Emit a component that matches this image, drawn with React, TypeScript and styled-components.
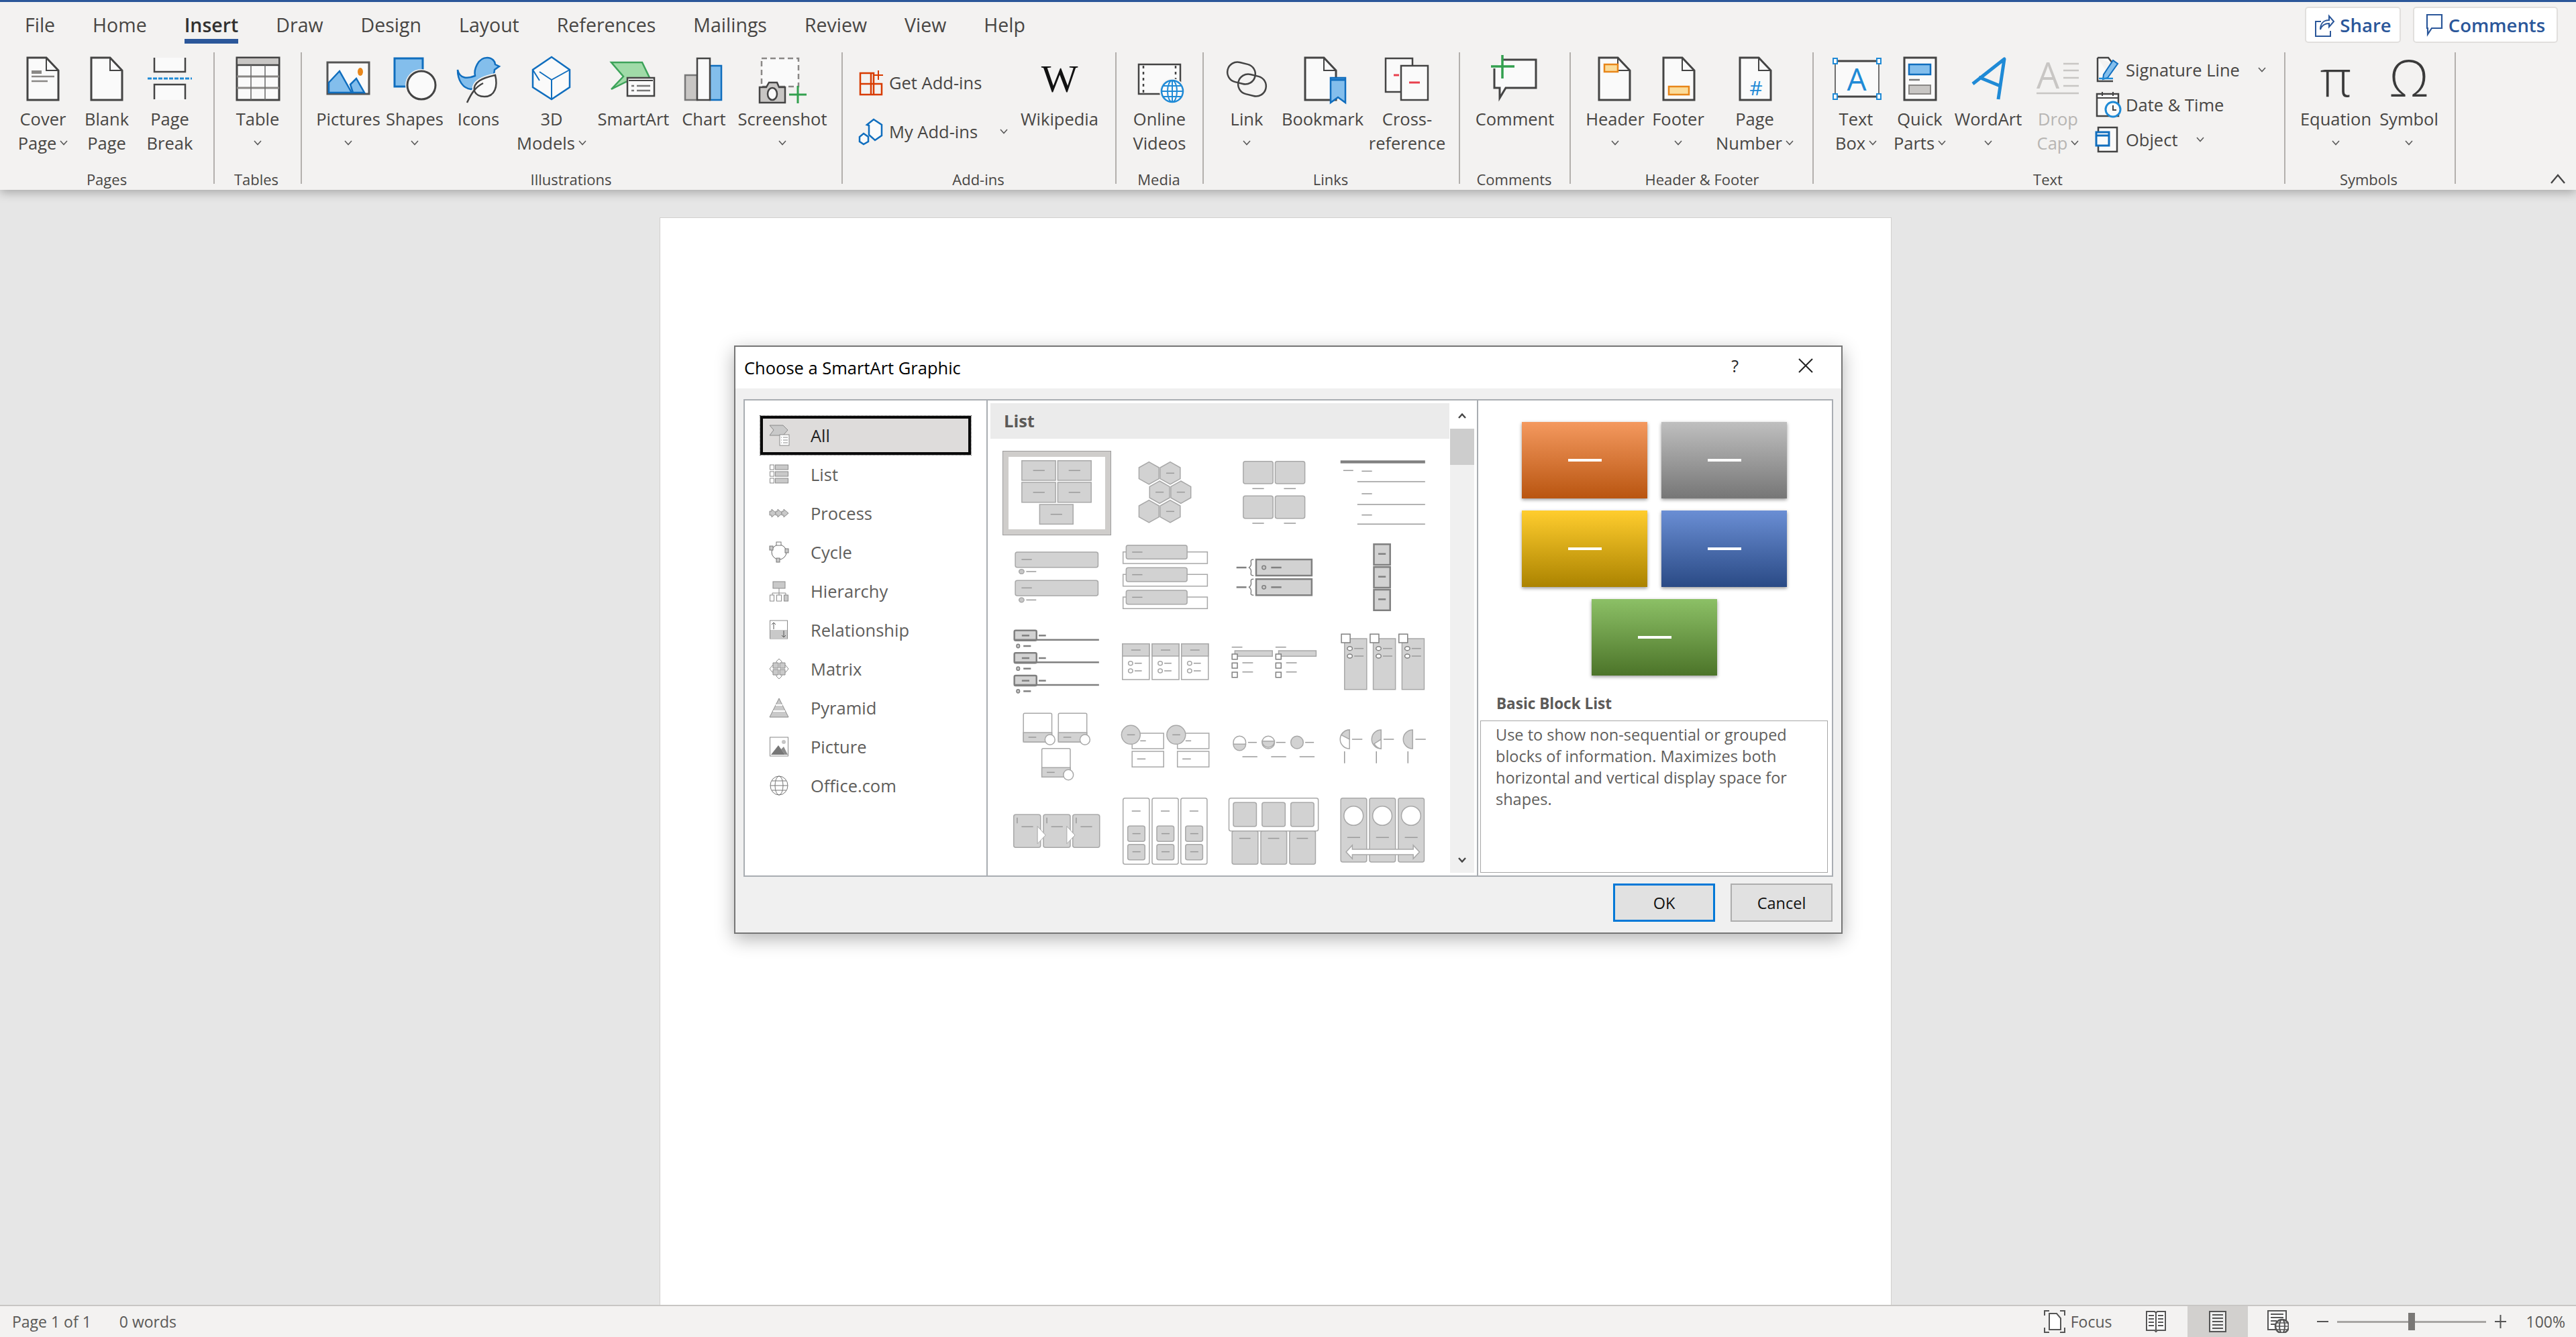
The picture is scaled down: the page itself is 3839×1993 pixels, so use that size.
import React from 'react'
import styled, { createGlobalStyle } from 'styled-components'

const INK = '#444444'
const BLUE = '#106ebe'
const LBLUE = '#83beec'
const SKY = '#1f8ad6'
const GREEN = '#33a04f'
const PAPER = '#fafafa'
const TXT = '#484644'

const GlobalStyle = createGlobalStyle`
  html, body { margin: 0; padding: 0; background: #e6e6e6; }
  body { font-family: "Open Sans", "Liberation Sans", sans-serif; overflow: hidden; }
`

const Screen = styled.div`
  width: 3839px;
  height: 1993px;
  display: flex;
  flex-direction: column;
  position: relative;
  overflow: hidden;
`

/* ---------- ribbon ---------- */
const Ribbon = styled.header`
  flex: none;
  background: #f3f2f1;
  border-top: 3px solid #2b579a;
  box-shadow: 0 4px 14px rgba(0, 0, 0, 0.28);
  position: relative;
  z-index: 2;
`

const TabRow = styled.div`
  height: 68px;
  display: flex;
  align-items: center;
  padding: 0 27px 0 37px;
`

const Tab = styled.div<{ $active?: boolean }>`
  height: 68px;
  line-height: 68px;
  margin-right: 56px;
  font-size: 28.5px;
  color: ${({ $active }) => ($active ? '#323130' : TXT)};
  font-weight: ${({ $active }) => ($active ? 600 : 400)};
  position: relative;
  ${({ $active }) =>
    $active &&
    `&::after {
      content: '';
      position: absolute;
      left: 0;
      right: 0;
      top: 55px;
      height: 7px;
      background: #2b579a;
    }`}
`

const TopActions = styled.div`
  margin-left: auto;
  display: flex;
  gap: 18px;
`

const ActionButton = styled.div<{ $w: number }>`
  width: ${({ $w }) => $w}px;
  height: 54px;
  box-sizing: border-box;
  background: #fff;
  border: 2px solid #e1dfdd;
  border-radius: 5px;
  display: flex;
  align-items: center;
  justify-content: center;
  gap: 8px;
  color: #2b579a;
  font-size: 27.5px;
  font-weight: 600;
`

const RibbonBody = styled.div`
  height: 212px;
  padding-top: 7px;
  box-sizing: border-box;
  display: flex;
  align-items: flex-start;
`

const Group = styled.section<{ $w: number; $pad?: number }>`
  width: ${({ $w }) => $w}px;
  flex: none;
  padding-left: ${({ $pad }) => $pad ?? 0}px;
  box-sizing: border-box;
  display: flex;
  flex-direction: column;
`

const GroupItems = styled.div`
  height: 174px;
  display: flex;
`

const GroupLabel = styled.div<{ $shift?: number }>`
  height: 30px;
  line-height: 30px;
  font-size: 22px;
  color: ${TXT};
  text-align: center;
  white-space: nowrap;
  transform: translateX(${({ $shift }) => $shift ?? 0}px);
`

const Sep = styled.div`
  width: 2px;
  height: 196px;
  flex: none;
  background: #b3b0ad;
`

const BigButton = styled.div<{ $w: number; $off?: boolean }>`
  width: ${({ $w }) => $w}px;
  flex: none;
  padding-top: 4px;
  display: flex;
  flex-direction: column;
  align-items: center;
  color: ${({ $off }) => ($off ? '#b7b5b3' : TXT)};
  font-size: 25.5px;
  line-height: 36px;
`

const IconSlot = styled.div`
  height: 72px;
  width: 70px;
  margin-bottom: 5px;
  display: flex;
  align-items: center;
  justify-content: center;
`

const Ico = styled.svg`
  width: 70px;
  height: 72px;
  overflow: visible;
  display: block;
`

const TextLine = styled.div`
  height: 36px;
  display: flex;
  align-items: center;
  gap: 5px;
  white-space: nowrap;
`

const SmallStack = styled.div<{ $w: number; $top: number; $left?: number }>`
  width: ${({ $w }) => $w}px;
  flex: none;
  padding-top: ${({ $top }) => $top}px;
  padding-left: ${({ $left }) => $left ?? 0}px;
  box-sizing: border-box;
  display: flex;
  flex-direction: column;
`

const SmallRow = styled.div<{ $h: number }>`
  height: ${({ $h }) => $h}px;
  display: flex;
  align-items: center;
  gap: 9px;
  font-size: 25.5px;
  color: ${TXT};
  white-space: nowrap;
`

const SmallIco = styled.svg`
  width: 36px;
  height: 38px;
  overflow: visible;
  flex: none;
`

const ChevGap = styled.span<{ $w: number }>`
  display: inline-block;
  width: ${({ $w }) => $w}px;
`

const WikiMark = styled.span`
  font-family: "Liberation Serif", serif;
  font-size: 58px;
  line-height: 72px;
  color: #111;
`

const MathMark = styled.span`
  font-family: "Open Sans", "DejaVu Sans", sans-serif;
  font-weight: 300;
  font-size: 76px;
  line-height: 66px;
  color: #3a3a3a;
  height: 72px;
`

const Collapse = styled.div`
  margin: 180px 0 0 140px;
`

/* ---------- canvas ---------- */
const Canvas = styled.main`
  flex: 1;
  min-height: 0;
  background: #e6e6e6;
  padding: 42px 37px 0 0;
  display: flex;
  justify-content: center;
`

const PageSheet = styled.div`
  width: 1834px;
  background: #fff;
  box-shadow: 0 0 0 1px #d2d0ce;
`

/* ---------- dialog ---------- */
const Dialog = styled.div`
  position: absolute;
  left: 1094px;
  top: 515px;
  width: 1652px;
  height: 877px;
  box-sizing: border-box;
  border: 2px solid #767676;
  background: #f0f0f0;
  box-shadow: 0 8px 26px rgba(0, 0, 0, 0.3);
  z-index: 3;
  display: flex;
  flex-direction: column;
`

const TitleBar = styled.div`
  height: 62px;
  flex: none;
  background: #fff;
  display: flex;
  align-items: center;
  padding: 0 42px 0 13px;
  font-size: 25.5px;
  color: #000;
`

const TitleTools = styled.div`
  margin-left: auto;
  display: flex;
  align-items: center;
  gap: 89px;
  font-size: 25px;
  color: #222;
  padding-bottom: 6px;
`

const DialogBody = styled.div`
  margin: 16px 12px 0;
  height: 712px;
  box-sizing: border-box;
  flex: none;
  border: 2px solid #a9adb2;
  background: #fff;
  display: flex;
`

const CategoryPane = styled.nav`
  width: 360px;
  flex: none;
  box-sizing: border-box;
  padding: 23px 23px 0;
  border-right: 0;
`

const Category = styled.div<{ $on?: boolean }>`
  height: 58px;
  box-sizing: border-box;
  display: flex;
  align-items: center;
  gap: 33px;
  padding-left: ${({ $on }) => ($on ? 10 : 14)}px;
  font-size: 25.5px;
  color: ${({ $on }) => ($on ? '#222' : '#5f5e5c')};
  ${({ $on }) =>
    $on &&
    `background: #dedcdb;
     border: 4px solid #0a0a0a;
     outline: 1px dotted #555;`}
`

const CatIco = styled.svg`
  width: 28px;
  height: 30px;
  flex: none;
  overflow: visible;
`

const GalleryPane = styled.div`
  width: 733px;
  flex: none;
  box-sizing: border-box;
  border-left: 2px solid #a9adb2;
  border-right: 2px solid #a9adb2;
  padding: 4px 6px 4px 4px;
  display: flex;
  gap: 1px;
`

const GalleryMain = styled.div`
  width: 684px;
  flex: none;
  overflow: hidden;
`

const GalleryHead = styled.div`
  height: 53px;
  line-height: 53px;
  padding-left: 20px;
  background: #ebebeb;
  color: #5c5a58;
  font-size: 25.5px;
  font-weight: 700;
`

const ThumbGrid = styled.div`
  margin: 18px 0 0 18px;
  display: grid;
  grid-template-columns: repeat(4, 162px);
  grid-auto-rows: 125px;
`

const ThumbCell = styled.div<{ $on?: boolean }>`
  width: 162px;
  height: 126px;
  ${({ $on }) => $on && 'box-shadow: inset 0 0 0 1px #9c9c9c, inset 0 0 0 9px #cfcdcb;'}
`

const ThumbSvg = styled.svg`
  width: 162px;
  height: 126px;
  display: block;
  overflow: visible;
  * {
    vector-effect: non-scaling-stroke;
  }
`

const ScrollTrack = styled.div`
  width: 36px;
  flex: none;
  background: #f0f0f0;
  display: flex;
  flex-direction: column;
  align-items: center;
`

const ScrollCap = styled.div`
  height: 38px;
  width: 100%;
  background: #fff;
  display: flex;
  align-items: center;
  justify-content: center;
`

const ScrollThumb = styled.div`
  height: 54px;
  width: 36px;
  background: #cdcdcd;
`

const ScrollEnd = styled.div`
  margin-top: auto;
  height: 38px;
  display: flex;
  align-items: center;
  justify-content: center;
`

const DetailPane = styled.aside`
  width: 525px;
  flex: none;
  display: flex;
  flex-direction: column;
`

const Swatches = styled.div`
  padding-top: 32px;
  display: grid;
  grid-template-columns: 187px 187px;
  grid-auto-rows: 114px;
  column-gap: 21px;
  row-gap: 18px;
  justify-content: center;
`

const Swatch = styled.div<{ $from: string; $to: string; $center?: boolean }>`
  background: linear-gradient(${({ $from }) => $from}, ${({ $to }) => $to});
  box-shadow: 0 2px 5px rgba(0, 0, 0, 0.4);
  display: flex;
  align-items: center;
  justify-content: center;
  ${({ $center }) => $center && 'grid-column: 1 / span 2; width: 187px; justify-self: center;'}
  &::after {
    content: '';
    width: 50px;
    height: 4px;
    background: #fff;
  }
`

const DetailTitle = styled.div`
  margin: 25px 0 0 27px;
  height: 34px;
  line-height: 34px;
  font-size: 22.5px;
  font-weight: 700;
  color: #5c5a58;
`

const DetailText = styled.div`
  margin: 8px 4px 0 3px;
  height: 227px;
  box-sizing: border-box;
  border: 1px solid #a6a6a6;
  padding: 4px 14px 0 22px;
  font-size: 23.5px;
  line-height: 32px;
  color: #605e5c;
`

const DialogFoot = styled.div`
  padding: 10px 13px 0 0;
  display: flex;
  justify-content: flex-end;
  gap: 23px;
`

const DialogButton = styled.div<{ $primary?: boolean }>`
  width: 152px;
  height: 57px;
  box-sizing: border-box;
  background: #e1e1e1;
  border: ${({ $primary }) => ($primary ? '3px solid #0078d7' : '2px solid #adadad')};
  display: flex;
  align-items: center;
  justify-content: center;
  font-size: 23.5px;
  color: #111;
`

/* ---------- status bar ---------- */
const StatusBar = styled.footer`
  flex: none;
  height: 48px;
  box-sizing: border-box;
  border-top: 2px solid #c8c6c4;
  background: #f3f2f1;
  display: flex;
  align-items: center;
  padding: 0 16px 0 18px;
  font-size: 23px;
  color: #5a5957;
`

const StatusText = styled.span<{ $gap?: number }>`
  margin-left: ${({ $gap }) => $gap ?? 0}px;
  white-space: nowrap;
`

const StatusIco = styled.svg<{ $gap?: number; $w: number; $push?: boolean }>`
  width: ${({ $w }) => $w}px;
  height: 34px;
  margin-left: ${({ $gap, $push }) => ($push ? 'auto' : `${$gap ?? 0}px`)};
  flex: none;
`

const ViewTab = styled.div<{ $gap: number; $on?: boolean }>`
  width: 90px;
  height: 46px;
  margin-left: ${({ $gap }) => $gap}px;
  background: ${({ $on }) => ($on ? '#d2d0ce' : 'transparent')};
  display: flex;
  align-items: center;
  justify-content: center;
  flex: none;
`

const ZoomMinus = styled.svg`
  width: 17px;
  height: 4px;
  margin-left: 42px;
  flex: none;
`

const ZoomPlus = styled.svg`
  width: 17px;
  height: 22px;
  flex: none;
`

const ZoomSlider = styled.div`
  width: 222px;
  height: 3px;
  background: #a8a6a4;
  margin: 0 13px;
  position: relative;
  flex: none;
`

const ZoomThumb = styled.div`
  position: absolute;
  left: 106px;
  top: -12px;
  width: 10px;
  height: 26px;
  background: #7a7876;
`

const ChevSvg = styled.svg`
  width: 12px;
  height: 8px;
  flex: none;
`

/* ---------- small bits ---------- */
const Chev = ({ up, dark }: { up?: boolean; dark?: boolean }) => (
  <ChevSvg viewBox="0 0 12 8">
    <path
      d={up ? 'M1 7l5-5.5L11 7' : 'M1 1l5 5.5L11 1'}
      fill="none"
      stroke={dark ? '#444' : '#5a5a5a'}
      strokeWidth={dark ? 2.4 : 1.6}
    />
  </ChevSvg>
)

const DocShape = ({ x = 12, fill = PAPER }: { x?: number; fill?: string }) => (
  <g fill={fill} stroke={INK} strokeWidth="3">
    <path d={`M${x} 4H${x + 28}L${x + 46} 23V67H${x}Z`} />
    <path d={`M${x + 28} 4V23H${x + 46}`} fill="none" strokeWidth="2" />
  </g>
)

interface BigProps {
  w: number
  first?: string
  second?: string
  chev?: 'inline' | 'below'
  off?: boolean
  children: React.ReactNode
}

const Big = ({ w, first, second, chev, off, children }: BigProps) => (
  <BigButton $w={w} $off={off}>
    <IconSlot>{children}</IconSlot>
    <TextLine>{first}</TextLine>
    <TextLine>
      {second}
      {chev && <Chev />}
    </TextLine>
  </BigButton>
)

/* ---------- ribbon drawings ---------- */
const CoverIcon = () => (
  <Ico viewBox="0 0 70 72">
    <DocShape />
    <rect x="18" y="23" width="15" height="5" fill="#8a8886" />
    <path d="M18 32h34M18 39h24" stroke="#8a8886" strokeWidth="2.5" />
  </Ico>
)
const BlankIcon = () => (
  <Ico viewBox="0 0 70 72">
    <DocShape />
  </Ico>
)
const BreakIcon = () => (
  <Ico viewBox="0 0 70 72">
    <path d="M12 4V25H58V4Z" fill={PAPER} stroke="none" />
    <path d="M12 4V25H58V4" fill="none" stroke={INK} strokeWidth="2.5" strokeDasharray="0" />
    <path d="M2 35H68" stroke={SKY} strokeWidth="3" strokeDasharray="6 2" />
    <path d="M12 67V44H58V67Z" fill={PAPER} stroke="none" />
    <path d="M12 66V44H58V66" fill="none" stroke={INK} strokeWidth="2.5" />
  </Ico>
)
const TableIcon = () => (
  <Ico viewBox="0 0 70 72">
    <rect x="4" y="4" width="63" height="63" fill={PAPER} stroke={INK} strokeWidth="3" />
    <rect x="5" y="5" width="61" height="10" fill="#c8c6c4" />
    <path d="M4 15H67" stroke={INK} strokeWidth="2.5" />
    <path d="M4 32H67M4 49H67" stroke="#8a8886" strokeWidth="3" />
    <path d="M25 15V67M46 15V67" stroke="#6a6a6a" strokeWidth="1.5" />
  </Ico>
)
const PicturesIcon = () => (
  <Ico viewBox="0 0 70 72">
    <rect x="4" y="11" width="62" height="47" fill={PAPER} stroke="#555" strokeWidth="3" />
    <path d="M6 41L22 24L40 56H6Z" fill={LBLUE} stroke={BLUE} strokeWidth="2.5" />
    <path d="M38 44L47 35L59 56H42Z" fill={LBLUE} stroke={BLUE} strokeWidth="2.5" />
    <ellipse cx="53" cy="25" rx="4" ry="6" fill="#e8861a" />
  </Ico>
)
const ShapesIcon = () => (
  <Ico viewBox="0 0 70 72">
    <rect x="5" y="5" width="42" height="42" fill={LBLUE} stroke={BLUE} strokeWidth="3" />
    <circle cx="45" cy="45" r="24" fill="#f3f2f1" />
    <circle cx="45" cy="45" r="21" fill={PAPER} stroke={INK} strokeWidth="3" />
  </Ico>
)
const IconsIcon = () => (
  <Ico viewBox="0 0 70 72">
    <path
      d="M4 22C7 35 18 36 30 31C28 22 34 4 48 4C56 4 60 10 60 14L66 17L59 22C58 34 54 40 40 40C30 44 30 50 24 51C12 50 4 38 4 22Z"
      fill={LBLUE}
      stroke={BLUE}
      strokeWidth="2.5"
    />
    <path d="M29 54C26 40 42 34 60 30C64 46 60 62 44 62C38 62 32 60 29 54Z" fill="#f3f2f1" stroke="#f3f2f1" strokeWidth="6" />
    <path d="M29 54C26 40 42 34 60 30C64 46 60 62 44 62C38 62 32 60 29 54Z" fill={PAPER} stroke={INK} strokeWidth="2.5" />
    <path d="M18 71C24 58 30 48 42 42" fill="none" stroke={INK} strokeWidth="2.5" />
  </Ico>
)
const ModelsIcon = () => (
  <Ico viewBox="0 0 70 72">
    <path d="M35 3L62 22V48L35 66L7 48V22Z" fill={PAPER} stroke={BLUE} strokeWidth="2.5" />
    <path d="M7 22L17 38 M62 22L35 37V66M35 37L17 25" fill="none" stroke={BLUE} strokeWidth="2" />
  </Ico>
)
const SmartArtIcon = () => (
  <Ico viewBox="0 0 70 72">
    <path d="M2 11H48L62 40H24L2 51L20 32Z" fill="#a0dba8" stroke="#3da35a" strokeWidth="2.5" />
    <rect x="26" y="34" width="40" height="27" fill={PAPER} stroke={INK} strokeWidth="2.5" />
    <path d="M28 38H64" stroke={INK} strokeWidth="2" />
    <path d="M32 46H36M40 46H60M32 53H36M40 53H60" stroke="#777" strokeWidth="2.5" />
  </Ico>
)
const ChartIcon = () => (
  <Ico viewBox="0 0 70 72">
    <rect x="7" y="30" width="18" height="37" fill="#c8c6c4" stroke="#777" strokeWidth="2.5" />
    <rect x="44" y="16" width="17" height="51" fill={LBLUE} stroke={BLUE} strokeWidth="2.5" />
    <rect x="25" y="5" width="19" height="62" fill={PAPER} stroke={INK} strokeWidth="2.5" />
  </Ico>
)
const ScreenshotIcon = () => (
  <Ico viewBox="0 0 70 72">
    <rect x="4" y="5" width="55" height="42" fill={PAPER} stroke="#8a8886" strokeWidth="2.5" strokeDasharray="8 5" />
    <path d="M1 48H11L15 41H27L30 48H39V71H1Z" fill="#c8c6c4" stroke={INK} strokeWidth="2.5" />
    <ellipse cx="20" cy="58" rx="7" ry="9" fill={PAPER} stroke={INK} strokeWidth="2.5" />
    <path d="M45 59H71M58 46V72" stroke={GREEN} strokeWidth="3" />
  </Ico>
)
const VideosIcon = () => (
  <Ico viewBox="0 0 70 72">
    <rect x="4" y="14" width="62" height="44" fill={PAPER} stroke={INK} strokeWidth="2.5" />
    <path d="M11 16V56M59 16V56" stroke={INK} strokeWidth="2.5" strokeDasharray="4 5" />
    <circle cx="54" cy="54" r="19" fill="#f3f2f1" />
    <circle cx="54" cy="54" r="16" fill={PAPER} stroke={SKY} strokeWidth="2.5" />
    <ellipse cx="54" cy="54" rx="7" ry="16" fill="none" stroke={SKY} strokeWidth="2" />
    <path d="M38 54H70M41 46H67M41 62H67M54 38V70" stroke={SKY} strokeWidth="2" />
  </Ico>
)
const LinkIcon = () => (
  <Ico viewBox="0 0 70 72">
    <rect x="6" y="12" width="42" height="30" rx="15" transform="rotate(14 27 27)" fill="none" stroke={INK} strokeWidth="2.5" />
    <rect x="22" y="30" width="42" height="30" rx="15" transform="rotate(14 43 45)" fill="none" stroke={INK} strokeWidth="2.5" />
  </Ico>
)
const BookmarkIcon = () => (
  <Ico viewBox="0 0 70 72">
    <DocShape x={9} />
    <path d="M47 34H69V71L58 63L47 71Z" fill={LBLUE} stroke={BLUE} strokeWidth="2.5" />
    <path d="M47 37H69" stroke={BLUE} strokeWidth="3" />
  </Ico>
)
const CrossRefIcon = () => (
  <Ico viewBox="0 0 70 72">
    <rect x="3" y="5" width="40" height="50" fill={PAPER} stroke={INK} strokeWidth="2.5" />
    <rect x="26" y="16" width="40" height="51" fill={PAPER} stroke={INK} strokeWidth="2.5" />
    <path d="M15 30H23M38 41H54" stroke="#e8414e" strokeWidth="3" />
  </Ico>
)
const CommentIcon = () => (
  <Ico viewBox="0 0 70 72">
    <path d="M16 7H66V49H21L12 64V49H4V20" fill={PAPER} stroke={INK} strokeWidth="3" />
    <path d="M-1 17H34M16 0V35" stroke={GREEN} strokeWidth="3.5" />
  </Ico>
)
const HeaderIcon = () => (
  <Ico viewBox="0 0 70 72">
    <DocShape x={11} />
    <rect x="19" y="14" width="20" height="11" fill="#fbdc9a" stroke="#e8861a" strokeWidth="2.5" />
  </Ico>
)
const FooterIcon = () => (
  <Ico viewBox="0 0 70 72">
    <DocShape x={13} />
    <rect x="21" y="47" width="30" height="12" fill="#fbdc9a" stroke="#e8861a" strokeWidth="2.5" />
  </Ico>
)
const PageNumberIcon = () => (
  <Ico viewBox="0 0 70 72">
    <DocShape x={13} />
    <text x="37" y="60" textAnchor="middle" fontSize="30" fontFamily="Open Sans" fill={SKY}>
      #
    </text>
  </Ico>
)
const TextBoxIcon = () => (
  <Ico viewBox="0 0 70 72">
    <rect x="4" y="9" width="65" height="53" fill={PAPER} stroke={INK} strokeWidth="1.5" />
    <path d="M4 9H69M4 62H69" stroke={INK} strokeWidth="3" />
    <text x="36" y="53" textAnchor="middle" fontSize="46" fontFamily="Open Sans" fill={SKY}>
      A
    </text>
    <path d="M1 5h6v8h-6zM66 5h6v8h-6zM1 58h6v8h-6zM66 58h6v8h-6z" fill={PAPER} stroke={SKY} strokeWidth="2" />
  </Ico>
)
const QuickPartsIcon = () => (
  <Ico viewBox="0 0 70 72">
    <rect x="12" y="4" width="47" height="63" fill={PAPER} stroke={INK} strokeWidth="3" />
    <rect x="19" y="14" width="32" height="15" fill={LBLUE} stroke={BLUE} strokeWidth="2.5" />
    <path d="M19 37H35" stroke="#777" strokeWidth="2.5" />
    <rect x="19" y="45" width="32" height="13" fill="#c8c6c4" stroke="#8a8886" strokeWidth="2" />
  </Ico>
)
const WordArtIcon = () => (
  <Ico viewBox="0 0 70 72">
    <path d="M12 43L59 6L50 66M21 33L55 47" fill="none" stroke={SKY} strokeWidth="5" strokeLinejoin="round" />
  </Ico>
)
const DropCapIcon = () => (
  <Ico viewBox="0 0 70 72">
    <text x="20" y="50" textAnchor="middle" fontSize="54" fontFamily="Open Sans" fill="#c8c6c4">
      A
    </text>
    <path d="M43 13H66M43 23H66M43 34H66M43 46H66M3 57H66" stroke="#c8c6c4" strokeWidth="2.5" />
  </Ico>
)

const GetAddinsIcon = () => (
  <SmallIco viewBox="0 0 36 38">
    <path d="M2 5H22V37H2ZM2 21H34V37H2ZM2 5V37M18 5V37" fill="none" stroke="#d83b01" strokeWidth="2.5" />
    <path d="M22 8H36M29 1V15" stroke="#d83b01" strokeWidth="2" />
  </SmallIco>
)
const MyAddinsIcon = () => (
  <SmallIco viewBox="0 0 36 38">
    <path d="M12 9L22 1L34 9V25L24 32L15 24V10Z" fill={PAPER} stroke={BLUE} strokeWidth="2.5" />
    <path d="M7 22L14 27V34L7 38L1 34V27Z" fill={PAPER} stroke={BLUE} strokeWidth="2.5" />
  </SmallIco>
)
const SignatureIcon = () => (
  <SmallIco viewBox="0 0 36 38">
    <path d="M3 1H19L26 10M26 36H3V1" fill={PAPER} stroke={INK} strokeWidth="2.5" />
    <path d="M12 26L26 5L33 10L18 31L11 33Z" fill={LBLUE} stroke={BLUE} strokeWidth="2" />
    <path d="M5 32H26" stroke={SKY} strokeWidth="2.5" />
  </SmallIco>
)
const DateTimeIcon = () => (
  <SmallIco viewBox="0 0 36 38">
    <rect x="2" y="3" width="32" height="33" fill={PAPER} stroke={INK} strokeWidth="2.5" />
    <path d="M2 9H34M10 0V6M26 0V6" stroke={INK} strokeWidth="2" />
    <circle cx="26" cy="26" r="11" fill={PAPER} stroke={SKY} strokeWidth="3" />
    <path d="M26 20V27H31" fill="none" stroke={INK} strokeWidth="2" />
  </SmallIco>
)
const ObjectIcon = () => (
  <SmallIco viewBox="0 0 36 38">
    <rect x="4" y="1" width="28" height="36" fill={PAPER} stroke={INK} strokeWidth="2.5" />
    <rect x="1" y="8" width="19" height="20" fill={PAPER} stroke={BLUE} strokeWidth="3" />
    <path d="M1 13H20" stroke={BLUE} strokeWidth="3" />
  </SmallIco>
)

/* ---------- category drawings ---------- */
const CatAll = () => (
  <CatIco viewBox="0 0 28 30">
    <path d="M0 0H20L27 7L20 15H0L6 7Z" fill="#c9c9c9" stroke="#8a8a8a" strokeWidth="1" />
    <rect x="15" y="14" width="14" height="16" fill="#fff" stroke="#8a8a8a" />
    <path d="M17 18h1M20 18h7M17 22h1M20 22h7M17 26h1M20 26h7" stroke="#8a8a8a" />
  </CatIco>
)
const CatList = () => (
  <CatIco viewBox="0 0 28 30">
    {[1, 11, 21].map(y => (
      <g key={y} stroke="#8a8a8a">
        <rect x="0.5" y={y} width="6" height="7" fill="#fff" />
        <rect x="8.5" y={y} width="19" height="7" fill="#c9c9c9" />
      </g>
    ))}
  </CatIco>
)
const CatProcess = () => (
  <CatIco viewBox="0 0 28 30">
    {[0, 9, 18].map(x => (
      <path key={x} d={`M${x} 12h3v-3l7 6-7 6v-3h-3z`} fill="#c9c9c9" stroke="#8a8a8a" />
    ))}
  </CatIco>
)
const CatCycle = () => (
  <CatIco viewBox="0 0 28 30">
    <circle cx="14" cy="15" r="11" fill="none" stroke="#666" />
    <rect x="10" y="0" width="7" height="5" fill="#fff" stroke="#777" />
    <rect x="0" y="6" width="5" height="6" fill="#c9c9c9" stroke="#777" />
    <rect x="23" y="10" width="5" height="6" fill="#c9c9c9" stroke="#777" />
    <rect x="10" y="24" width="5" height="6" fill="#c9c9c9" stroke="#777" />
  </CatIco>
)
const CatHierarchy = () => (
  <CatIco viewBox="0 0 28 30">
    <rect x="5" y="1" width="18" height="10" fill="#c9c9c9" stroke="#8a8a8a" />
    <path d="M14 11v7M4 21v-3h20v3M14 18v3" fill="none" stroke="#8a8a8a" />
    <rect x="0.5" y="21" width="6" height="9" fill="#fff" stroke="#8a8a8a" />
    <rect x="10.5" y="21" width="7" height="9" fill="#fff" stroke="#8a8a8a" />
    <rect x="21.5" y="21" width="6" height="9" fill="#c9c9c9" stroke="#8a8a8a" />
  </CatIco>
)
const CatRelationship = () => (
  <CatIco viewBox="0 0 28 30">
    <rect x="0.5" y="1" width="26" height="27" fill="#fff" stroke="#8a8a8a" />
    <rect x="1" y="15" width="25" height="13" fill="#c9c9c9" />
    <path d="M6 14V4M3 7l3-3 3 3M21 16v10M18 23l3 3 3-3" fill="none" stroke="#555" />
  </CatIco>
)
const CatMatrix = () => (
  <CatIco viewBox="0 0 28 30">
    <path d="M14 0l4 4v6h6l4 5-4 5h-6v6l-4 4-4-4v-6H4l-4-5 4-5h6V4z" fill="#fff" stroke="#8a8a8a" />
    <path d="M5 6h8v8H5zM15 6h8v8h-8zM5 16h8v8H5zM15 16h8v8h-8z" fill="#c9c9c9" stroke="#8a8a8a" />
  </CatIco>
)
const CatPyramid = () => (
  <CatIco viewBox="0 0 28 30">
    <path d="M14 1L28 29H0Z" fill="#c9c9c9" stroke="#8a8a8a" />
    <path d="M9 11H19M5 20H23" stroke="#fff" strokeWidth="2" />
  </CatIco>
)
const CatPicture = () => (
  <CatIco viewBox="0 0 28 30">
    <rect x="0.5" y="1" width="27" height="28" fill="#fff" stroke="#8a8a8a" />
    <path d="M2 27L13 13L23 27Z" fill="#777" />
    <path d="M17 19L21 15L27 27H23Z" fill="#8a8a8a" />
    <circle cx="21" cy="8" r="3" fill="#c4c4c4" />
  </CatIco>
)
const CatOffice = () => (
  <CatIco viewBox="0 0 28 30">
    <ellipse cx="14" cy="15" rx="13" ry="14" fill="#fff" stroke="#777" />
    <ellipse cx="14" cy="15" rx="6" ry="14" fill="none" stroke="#777" />
    <path d="M1 15H27M3 8H25M3 22H25" stroke="#777" fill="none" />
  </CatIco>
)

/* ---------- gallery thumbnails, drawn on a 348x378 grid stretched to the cell ---------- */
const SHAPE = '#d2d2d2'
const EDGE = '#a8a8a8'
const DARK = '#808080'
const LINE = '#9a9a9a'

interface BoxProps {
  x: number
  y: number
  w: number
  h: number
  r?: number
  fill?: string
  stroke?: string
  sw?: number
}
const Box = ({ x, y, w, h, r = 0, fill = SHAPE, stroke = EDGE, sw = 1.5 }: BoxProps) => (
  <rect x={x} y={y} width={w} height={h} rx={r * 2.148} ry={r * 3} fill={fill} stroke={stroke} strokeWidth={sw} />
)
const Dash = ({ x1, x2, y, sw = 1.5, c = LINE }: { x1: number; x2: number; y: number; sw?: number; c?: string }) => (
  <path d={`M${x1} ${y}H${x2}`} stroke={c} strokeWidth={sw} fill="none" />
)
const Dot = ({ x, y, rx, ry, fill = '#fff', stroke = EDGE, sw = 1.5 }: { x: number; y: number; rx: number; ry: number; fill?: string; stroke?: string; sw?: number }) => (
  <ellipse cx={x} cy={y} rx={rx} ry={ry} fill={fill} stroke={stroke} strokeWidth={sw} />
)
const Hex = ({ x, y, dash }: { x: number; y: number; dash?: boolean }) => (
  <>
    <path
      d={`M${x} ${y - 50}L${x + 32} ${y - 25}V${y + 25}L${x} ${y + 50}L${x - 32} ${y + 25}V${y - 25}Z`}
      fill={SHAPE}
      stroke={EDGE}
      strokeWidth="1.5"
    />
    {dash && <Dash x1={x - 13} x2={x + 13} y={y} />}
  </>
)

const thumbs: React.ReactNode[] = [
  <>
    <Box x={62} y={44} w={108} h={88} />
    <Box x={177} y={44} w={107} h={88} />
    <Box x={62} y={141} w={108} h={89} />
    <Box x={177} y={141} w={107} h={89} />
    <Box x={119} y={240} w={107} h={88} />
    <Dash x1={98} x2={135} y={88} />
    <Dash x1={212} x2={249} y={88} />
    <Dash x1={98} x2={135} y={186} />
    <Dash x1={212} x2={249} y={186} />
    <Dash x1={154} x2={191} y={284} />
  </>,
  <>
    <Hex x={121} y={100} />
    <Hex x={189} y={100} dash />
    <Hex x={155} y={185} dash />
    <Hex x={223} y={185} dash />
    <Hex x={121} y={271} />
    <Hex x={189} y={271} dash />
  </>,
  <>
    {[47, 202].map(y => (
      <React.Fragment key={y}>
        <Box x={75} y={y} w={95} h={100} r={3} />
        <Box x={177} y={y} w={95} h={100} r={3} />
        <Dash x1={104} x2={141} y={y + 122} />
        <Dash x1={205} x2={243} y={y + 122} />
      </React.Fragment>
    ))}
  </>,
  <>
    <rect x={38} y={43} width={271} height={13} fill={DARK} />
    <Dash x1={47} x2={79} y={88} />
    <Dash x1={106} x2={139} y={91} />
    <Dash x1={92} x2={309} y={138} />
    <Dash x1={106} x2={139} y={192} />
    <Dash x1={92} x2={309} y={240} />
    <Dash x1={106} x2={139} y={287} />
    <Dash x1={92} x2={309} y={328} />
  </>,
  <>
    {[78, 205].map(y => (
      <React.Fragment key={y}>
        <Box x={41} y={y} w={265} h={68} r={3} />
        <Dash x1={61} x2={94} y={y + 33} />
        <Dot x={61} y={y + 87} rx={8} ry={10} fill="#c8c8c8" />
        <Dash x1={76} x2={108} y={y + 87} />
      </React.Fragment>
    ))}
  </>,
  <>
    {[0, 101, 202].map(d => (
      <React.Fragment key={d}>
        <Box x={38} y={77 + d} w={270} h={52} fill="#fff" />
        <Box x={48} y={47 + d} w={195} h={62} r={3} />
        <Dash x1={67} x2={100} y={78 + d} />
      </React.Fragment>
    ))}
  </>,
  <>
    {[111, 199].map(y => (
      <React.Fragment key={y}>
        <Box x={116} y={y} w={178} h={72} stroke={DARK} sw={2.5} />
        <Dot x={141} y={y + 36} rx={6} ry={8} fill="#c8c8c8" stroke={DARK} />
        <Dash x1={164} x2={197} y={y + 36} sw={2.5} c={DARK} />
        <Dash x1={53} x2={85} y={y + 36} sw={2.5} c={DARK} />
        <path
          d={`M108 ${y}C96 ${y} 100 ${y + 8} 100 ${y + 20}C100 ${y + 30} 94 ${y + 36} 92 ${y + 36}C94 ${y + 36} 100 ${y + 42} 100 ${y + 52}C100 ${y + 64} 96 ${y + 72} 108 ${y + 72}`}
          fill="none"
          stroke={DARK}
          strokeWidth="1.5"
        />
      </React.Fragment>
    ))}
  </>,
  <>
    {[43, 145, 246].map(y => (
      <React.Fragment key={y}>
        <Box x={145} y={y} w={52} h={92} stroke={DARK} sw={2.5} />
        <Dash x1={159} x2={183} y={y + 43} sw={2.5} c={DARK} />
      </React.Fragment>
    ))}
  </>,
  <>
    {[0, 101, 202].map(d => (
      <React.Fragment key={d}>
        <Box x={38} y={53 + d} w={71} h={45} r={2} stroke={DARK} sw={2.5} />
        <Dash x1={62} x2={86} y={76 + d} sw={2.5} c={DARK} />
        <Dash x1={116} x2={139} y={76 + d} sw={2.5} c={DARK} />
        <Dash x1={38} x2={309} y={95 + d} sw={2.5} c={DARK} />
        <Dot x={50} y={123 + d} rx={5} ry={8} fill="#c8c8c8" stroke={DARK} />
        <Dash x1={67} x2={91} y={123 + d} sw={2.5} c={DARK} />
      </React.Fragment>
    ))}
  </>,
  <>
    {[36, 131, 225].map(x => (
      <React.Fragment key={x}>
        <Box x={x} y={113} w={86} h={160} fill="#fff" />
        <Box x={x} y={113} w={86} h={55} />
        <Dash x1={x + 28} x2={x + 58} y={141} />
        {[200, 234].map(y => (
          <React.Fragment key={y}>
            <Dot x={x + 26} y={y} rx={7} ry={9} />
            <Dash x1={x + 39} x2={x + 62} y={y} />
          </React.Fragment>
        ))}
      </React.Fragment>
    ))}
  </>,
  <>
    {[0, 140].map(d => (
      <React.Fragment key={d}>
        <Dash x1={38 + d} x2={72 + d} y={128} />
        <Box x={48 + d} y={144} w={120} h={25} />
        {[159, 199, 240].map(y => (
          <Box key={y} x={39 + d} y={y} w={17} h={23} fill="#fff" stroke={DARK} />
        ))}
        <Dash x1={72 + d} x2={106 + d} y={198} />
        <Dash x1={72 + d} x2={106 + d} y={239} />
      </React.Fragment>
    ))}
  </>,
  <>
    {[51, 143, 235].map(x => (
      <React.Fragment key={x}>
        <Box x={x} y={90} w={71} h={227} />
        <Box x={x - 10} y={70} w={28} h={38} fill="#fff" stroke={DARK} />
        {[134, 168].map(y => (
          <React.Fragment key={y}>
            <Dot x={x + 17} y={y} rx={8} ry={9} stroke={DARK} />
            <Dash x1={x + 31} x2={x + 61} y={y} />
          </React.Fragment>
        ))}
      </React.Fragment>
    ))}
  </>,
  <>
    {[
      [67, 49],
      [179, 49],
      [126, 206],
    ].map(([x, y]) => (
      <React.Fragment key={x}>
        <Box x={x} y={y} w={91} h={128} r={2} fill="#fff" />
        <Box x={x} y={y + 86} w={91} h={42} />
        <Dash x1={x + 16} x2={x + 41} y={y + 107} />
        <Dot x={x + 85} y={y + 118} rx={16} ry={23} />
      </React.Fragment>
    ))}
  </>,
  <>
    {[0, 145].map(d => (
      <React.Fragment key={d}>
        <Box x={67 + d} y={138} w={101} h={69} fill="#fff" />
        <Dash x1={93 + d} x2={111 + d} y={172} />
        <Dot x={63 + d} y={145} rx={30} ry={42} fill={SHAPE} />
        <Dash x1={51 + d} x2={76 + d} y={145} />
        <Box x={67 + d} y={219} w={101} h={70} fill="#fff" />
        <Dash x1={83 + d} x2={110 + d} y={253} />
      </React.Fragment>
    ))}
  </>,
  <>
    <Dot x={63} y={179} rx={20} ry={28} />
    <path d="M43 187H83A20 28 0 0 1 43 187Z" fill={SHAPE} stroke={EDGE} strokeWidth="1.5" />
    <Dot x={155} y={179} rx={20} ry={28} />
    <path d="M135 173H175A20 28 0 0 1 135 173Z" fill={SHAPE} stroke={EDGE} strokeWidth="1.5" />
    <Dot x={247} y={179} rx={20} ry={28} fill={SHAPE} />
    <Dash x1={90} x2={118} y={179} />
    <Dash x1={180} x2={210} y={179} />
    <Dash x1={273} x2={301} y={179} />
    <Dash x1={72} x2={120} y={243} />
    <Dash x1={164} x2={212} y={243} />
    <Dash x1={255} x2={303} y={243} />
  </>,
  <>
    <path d="M67 123A30 42 0 0 0 67 207Z" fill="#fff" stroke={EDGE} strokeWidth="1.5" />
    <path d="M67 123A30 42 0 0 0 41 146L67 165Z" fill={SHAPE} stroke={EDGE} strokeWidth="1.5" />
    <path d="M168 123A30 42 0 0 0 168 207Z" fill={SHAPE} stroke={EDGE} strokeWidth="1.5" />
    <path d="M168 165L146 185A30 42 0 0 0 168 207Z" fill="#fff" stroke={EDGE} strokeWidth="1.5" />
    <path d="M269 123A30 42 0 0 0 269 207Z" fill={SHAPE} stroke={EDGE} strokeWidth="1.5" />
    <Dash x1={75} x2={108} y={165} />
    <Dash x1={176} x2={209} y={165} />
    <Dash x1={278} x2={311} y={165} />
    <path d="M51 219V272M153 219V272M254 219V272" stroke={LINE} strokeWidth="1.5" />
  </>,
  <>
    {[36, 131, 225].map(x => (
      <React.Fragment key={x}>
        <Box x={x} y={127} w={86} h={147} r={3} />
        <path d={`M${x + 11} 140V166`} stroke={LINE} strokeWidth="1.5" />
        <Dash x1={x + 25} x2={x + 62} y={181} />
      </React.Fragment>
    ))}
    <path d="M112 179L138 219L112 257Z" fill="#fff" stroke={EDGE} strokeWidth="1" />
    <path d="M206 179L232 219L206 257Z" fill="#fff" stroke={EDGE} strokeWidth="1" />
  </>,
  <>
    {[38, 131, 223].map(x => (
      <React.Fragment key={x}>
        <Box x={x} y={53} w={84} h={296} r={3} fill="#fff" />
        <Dash x1={x + 28} x2={x + 56} y={111} />
        <Box x={x + 15} y={178} w={55} h={69} r={3} />
        <Dash x1={x + 30} x2={x + 56} y={212} />
        <Box x={x + 15} y={260} w={55} h={69} r={3} />
        <Dash x1={x + 30} x2={x + 56} y={293} />
      </React.Fragment>
    ))}
  </>,
  <>
    {[39, 131, 223].map(x => (
      <React.Fragment key={x}>
        <Box x={x} y={199} w={83} h={150} r={3} />
        <Dash x1={x + 23} x2={x + 59} y={233} />
      </React.Fragment>
    ))}
    <Box x={29} y={53} w={286} h={147} r={3} fill="#fff" />
    {[43, 135, 227].map(x => (
      <Box key={x} x={x} y={73} w={74} h={107} r={3} />
    ))}
  </>,
  <>
    {[39, 131, 223].map(x => (
      <React.Fragment key={x}>
        <Box x={x} y={53} w={83} h={286} r={3} />
        <Dot x={x + 41} y={132} rx={31} ry={43} />
        <Dash x1={x + 21} x2={x + 62} y={229} />
      </React.Fragment>
    ))}
    <path
      d="M56 294L76 264V282H271V264L291 294L271 324V306H76V324Z"
      fill="#fff"
      stroke={EDGE}
      strokeWidth="1.5"
    />
  </>,
]

const categories: [string, React.ComponentType][] = [
  ['All', CatAll],
  ['List', CatList],
  ['Process', CatProcess],
  ['Cycle', CatCycle],
  ['Hierarchy', CatHierarchy],
  ['Relationship', CatRelationship],
  ['Matrix', CatMatrix],
  ['Pyramid', CatPyramid],
  ['Picture', CatPicture],
  ['Office.com', CatOffice],
]

const tabs = ['File', 'Home', 'Insert', 'Draw', 'Design', 'Layout', 'References', 'Mailings', 'Review', 'View', 'Help']

const App = () => (
  <Screen>
    <GlobalStyle />
    <Ribbon>
      <TabRow>
        {tabs.map(t => (
          <Tab key={t} $active={t === 'Insert'}>
            {t}
          </Tab>
        ))}
        <TopActions>
          <ActionButton $w={143}>
            <svg width="30" height="38" viewBox="0 0 30 38">
              <path d="M10 14H2V36H24V28" fill="none" stroke="#2b579a" strokeWidth="2" />
              <path d="M9 26C9 17 14 12 22 12V6L29 14L22 22V17C16 17 11 20 9 26Z" fill="#fff" stroke="#2b579a" strokeWidth="2" />
            </svg>
            Share
          </ActionButton>
          <ActionButton $w={216}>
            <svg width="26" height="38" viewBox="0 0 26 38">
              <path d="M2 4H24V24H9L3 33V24H2Z" fill="#fff" stroke="#2b579a" strokeWidth="2.2" />
            </svg>
            Comments
          </ActionButton>
        </TopActions>
      </TabRow>
      <RibbonBody>
        <Group $w={318} $pad={16}>
          <GroupItems>
            <Big w={96} first="Cover" second="Page" chev="inline"><CoverIcon /></Big>
            <Big w={94} first="Blank" second="Page"><BlankIcon /></Big>
            <Big w={94} first="Page" second="Break"><BreakIcon /></Big>
          </GroupItems>
          <GroupLabel $shift={-8}>Pages</GroupLabel>
        </Group>
        <Sep />
        <Group $w={128}>
          <GroupItems>
            <Big w={128} first="Table" chev="below"><TableIcon /></Big>
          </GroupItems>
          <GroupLabel $shift={-2}>Tables</GroupLabel>
        </Group>
        <Sep />
        <Group $w={804} $pad={20}>
          <GroupItems>
            <Big w={98} first="Pictures" chev="below"><PicturesIcon /></Big>
            <Big w={100} first="Shapes" chev="below"><ShapesIcon /></Big>
            <Big w={90} first="Icons"><IconsIcon /></Big>
            <Big w={128} first="3D" second="Models" chev="inline"><ModelsIcon /></Big>
            <Big w={116} first="SmartArt"><SmartArtIcon /></Big>
            <Big w={94} first="Chart"><ChartIcon /></Big>
            <Big w={140} first="Screenshot" chev="below"><ScreenshotIcon /></Big>
          </GroupItems>
          <GroupLabel $shift={-11}>Illustrations</GroupLabel>
        </Group>
        <Sep />
        <Group $w={406} $pad={24}>
          <GroupItems>
            <SmallStack $w={230} $top={8}>
              <SmallRow $h={73}>
                <GetAddinsIcon />
                Get Add-ins
              </SmallRow>
              <SmallRow $h={73}>
                <MyAddinsIcon />
                My Add-ins
                <ChevGap $w={15} />
                <Chev />
              </SmallRow>
            </SmallStack>
            <BigButton $w={138}>
              <IconSlot>
                <WikiMark>W</WikiMark>
              </IconSlot>
              <TextLine>Wikipedia</TextLine>
            </BigButton>
          </GroupItems>
          <GroupLabel $shift={-13}>Add-ins</GroupLabel>
        </Group>
        <Sep />
        <Group $w={128}>
          <GroupItems>
            <Big w={128} first="Online" second="Videos"><VideosIcon /></Big>
          </GroupItems>
          <GroupLabel $shift={-1}>Media</GroupLabel>
        </Group>
        <Sep />
        <Group $w={380} $pad={8}>
          <GroupItems>
            <Big w={112} first="Link" chev="below"><LinkIcon /></Big>
            <Big w={114} first="Bookmark"><BookmarkIcon /></Big>
            <Big w={138} first="Cross-" second="reference"><CrossRefIcon /></Big>
          </GroupItems>
          <GroupLabel $shift={-5}>Links</GroupLabel>
        </Group>
        <Sep />
        <Group $w={163}>
          <GroupItems>
            <Big w={163} first="Comment"><CommentIcon /></Big>
          </GroupItems>
          <GroupLabel $shift={-1}>Comments</GroupLabel>
        </Group>
        <Sep />
        <Group $w={360} $pad={19}>
          <GroupItems>
            <Big w={94} first="Header" chev="below"><HeaderIcon /></Big>
            <Big w={94} first="Footer" chev="below"><FooterIcon /></Big>
            <Big w={134} first="Page" second="Number" chev="inline"><PageNumberIcon /></Big>
          </GroupItems>
          <GroupLabel $shift={6}>Header &amp; Footer</GroupLabel>
        </Group>
        <Sep />
        <Group $w={701} $pad={15}>
          <GroupItems>
            <Big w={96} first="Text" second="Box" chev="inline"><TextBoxIcon /></Big>
            <Big w={94} first="Quick" second="Parts" chev="inline"><QuickPartsIcon /></Big>
            <Big w={110} first="WordArt" chev="below"><WordArtIcon /></Big>
            <Big w={98} first="Drop" second="Cap" chev="inline" off><DropCapIcon /></Big>
            <SmallStack $w={280} $top={0} $left={7}>
              <SmallRow $h={52}>
                <SignatureIcon />
                Signature Line
                <ChevGap $w={9} />
                <Chev />
              </SmallRow>
              <SmallRow $h={52}>
                <DateTimeIcon />
                Date &amp; Time
              </SmallRow>
              <SmallRow $h={52}>
                <ObjectIcon />
                Object
                <ChevGap $w={9} />
                <Chev />
              </SmallRow>
            </SmallStack>
          </GroupItems>
          <GroupLabel $shift={-9}>Text</GroupLabel>
        </Group>
        <Sep />
        <Group $w={252} $pad={14}>
          <GroupItems>
            <BigButton $w={122}>
              <IconSlot>
                <MathMark>π</MathMark>
              </IconSlot>
              <TextLine>Equation</TextLine>
              <TextLine><Chev /></TextLine>
            </BigButton>
            <BigButton $w={96}>
              <IconSlot>
                <MathMark>Ω</MathMark>
              </IconSlot>
              <TextLine>Symbol</TextLine>
              <TextLine><Chev /></TextLine>
            </BigButton>
          </GroupItems>
          <GroupLabel $shift={-9}>Symbols</GroupLabel>
        </Group>
        <Sep />
        <Collapse>
          <svg width="24" height="16" viewBox="0 0 24 16">
            <path d="M2 14L12 2L22 14" fill="none" stroke="#444" strokeWidth="2.4" />
          </svg>
        </Collapse>
      </RibbonBody>
    </Ribbon>

    <Canvas>
      <PageSheet />
    </Canvas>

    <Dialog>
      <TitleBar>
        Choose a SmartArt Graphic
        <TitleTools>
          <span>?</span>
          <svg width="22" height="22" viewBox="0 0 22 22">
            <path d="M1 1L21 21M21 1L1 21" stroke="#222" strokeWidth="2" />
          </svg>
        </TitleTools>
      </TitleBar>
      <DialogBody>
        <CategoryPane>
          {categories.map(([name, Icon], i) => (
            <Category key={name} $on={i === 0}>
              <Icon />
              {name}
            </Category>
          ))}
        </CategoryPane>
        <GalleryPane>
          <GalleryMain>
            <GalleryHead>List</GalleryHead>
            <ThumbGrid>
              {thumbs.map((t, i) => (
                <ThumbCell key={i} $on={i === 0}>
                  <ThumbSvg viewBox="0 0 348 378" preserveAspectRatio="none">
                    {t}
                  </ThumbSvg>
                </ThumbCell>
              ))}
            </ThumbGrid>
          </GalleryMain>
          <ScrollTrack>
            <ScrollCap>
              <Chev up dark />
            </ScrollCap>
            <ScrollThumb />
            <ScrollEnd>
              <Chev dark />
            </ScrollEnd>
          </ScrollTrack>
        </GalleryPane>
        <DetailPane>
          <Swatches>
            <Swatch $from="#f4995f" $to="#b95510" />
            <Swatch $from="#bfbfbf" $to="#767676" />
            <Swatch $from="#ffcd2e" $to="#ab8300" />
            <Swatch $from="#6a8ed4" $to="#2a4a85" />
            <Swatch $from="#8cc066" $to="#4c7429" $center />
          </Swatches>
          <DetailTitle>Basic Block List</DetailTitle>
          <DetailText>
            Use to show non-sequential or grouped blocks of information. Maximizes both horizontal and vertical display space for shapes.
          </DetailText>
        </DetailPane>
      </DialogBody>
      <DialogFoot>
        <DialogButton $primary>OK</DialogButton>
        <DialogButton>Cancel</DialogButton>
      </DialogFoot>
    </Dialog>

    <StatusBar>
      <StatusText>Page 1 of 1</StatusText>
      <StatusText $gap={42}>0 words</StatusText>
      <StatusIco $push $w={32} viewBox="0 0 32 34">
        <path d="M1 8V1H8M24 1H31V8M1 26V33H8M24 33H31V26" fill="none" stroke="#555" strokeWidth="2" />
        <path d="M8 5H19L25 12V29H8Z" fill="#fff" stroke="#555" strokeWidth="2" />
      </StatusIco>
      <StatusText $gap={8}>Focus</StatusText>
      <StatusIco $gap={50} $w={30} viewBox="0 0 30 34">
        <path d="M1 2H13L15 4L17 2H29V30H17L15 32L13 30H1Z" fill="#fff" stroke="#555" strokeWidth="2" />
        <path d="M15 4V30M4 8H12M4 13H12M4 18H12M4 23H12M18 8H26M18 13H26M18 18H26M18 23H26" stroke="#555" strokeWidth="2" />
      </StatusIco>
      <ViewTab $gap={32} $on>
        <svg width="26" height="32" viewBox="0 0 26 32">
          <rect x="1" y="1" width="24" height="30" fill="#eee" stroke="#555" strokeWidth="2" />
          <path d="M5 6H21M5 11H21M5 16H21M5 21H21M5 26H21" stroke="#555" strokeWidth="2" />
        </svg>
      </ViewTab>
      <StatusIco $gap={29} $w={32} viewBox="0 0 32 34">
        <path d="M1 1H28V29H1Z" fill="#fff" stroke="#555" strokeWidth="2" />
        <path d="M5 6H24M5 11H24M5 16H14M5 21H14" stroke="#555" strokeWidth="2" />
        <circle cx="22" cy="24" r="10" fill="#fff" stroke="#555" strokeWidth="2.5" />
        <ellipse cx="22" cy="24" rx="4" ry="10" fill="none" stroke="#555" strokeWidth="2" />
        <path d="M12 24H32M14 19H30M14 29H30" stroke="#555" strokeWidth="1.5" />
      </StatusIco>
      <ZoomMinus viewBox="0 0 17 4">
        <path d="M0 2H17" stroke="#555" strokeWidth="2" />
      </ZoomMinus>
      <ZoomSlider>
        <ZoomThumb />
      </ZoomSlider>
      <ZoomPlus viewBox="0 0 17 22">
        <path d="M0 11H17M8.5 1V21" stroke="#555" strokeWidth="2" />
      </ZoomPlus>
      <StatusText $gap={30}>100%</StatusText>
    </StatusBar>
  </Screen>
)

export default App
